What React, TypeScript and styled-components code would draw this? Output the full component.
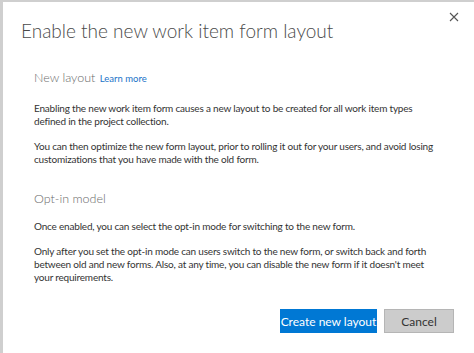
import React from 'react';
import styled, { createGlobalStyle } from 'styled-components';

const GlobalStyle = createGlobalStyle`
  html, body {
    margin: 0;
    padding: 0;
    background: #ffffff;
  }
  body {
    font-family: Lato, "Liberation Sans", sans-serif;
  }
`;

const App = () => (
  <>
    <GlobalStyle />
    <Dialog>
      <Header>
        <Title>Enable the new work item form layout</Title>
        <CloseButton aria-label="Close">
          <svg width="10" height="10" viewBox="0 0 10 10">
            <path d="M1 1 L9 9 M9 1 L1 9" stroke="#555" strokeWidth="1.1" />
          </svg>
        </CloseButton>
      </Header>
      <Body>
        <Section>
          <SectionTitle $space={2}>
            New layout <LearnMore href="#">Learn more</LearnMore>
          </SectionTitle>
          <Paragraph>
            Enabling the new work item form causes a new layout to be created for all work item types
            <br />
            defined in the project collection.
          </Paragraph>
          <Paragraph>
            You can then optimize the new form layout, prior to rolling it out for your users, and avoid losing
            <br />
            customizations that you have made with the old form.
          </Paragraph>
        </Section>
        <Section>
          <SectionTitle $space={0}>Opt-in model</SectionTitle>
          <Paragraph>Once enabled, you can select the opt-in mode for switching to the new form.</Paragraph>
          <Paragraph>
            Only after you set the opt-in mode can users switch to the new form, or switch back and forth
            <br />
            between old and new forms. Also, at any time, you can disable the new form if it doesn't meet
            <br />
            your requirements.
          </Paragraph>
        </Section>
      </Body>
      <Footer>
        <PrimaryButton>Create new layout</PrimaryButton>
        <SecondaryButton>Cancel</SecondaryButton>
      </Footer>
    </Dialog>
  </>
);

const Dialog = styled.div`
  box-sizing: border-box;
  width: 474px;
  height: 353px;
  border-left: 3px solid #cfcfcf;
  border-top: 2px solid #cfcfcf;
  background: #ffffff;
  display: flex;
  flex-direction: column;
  overflow: hidden;
`;

const Header = styled.div`
  position: relative;
  padding: 15px 0 0 18px;
  height: 48px;
  box-sizing: border-box;
`;

const Title = styled.h1`
  margin: 0;
  font-family: Lato, "Liberation Sans", sans-serif;
  font-weight: 300;
  font-size: 19px;
  line-height: 28px;
  color: #4a4a4a;
`;

const CloseButton = styled.button`
  position: absolute;
  top: 8px;
  right: 13px;
  width: 14px;
  height: 14px;
  padding: 0;
  border: none;
  background: transparent;
  display: flex;
  align-items: center;
  justify-content: center;
`;

const Body = styled.div`
  padding: 19px 20px 0 31px;
  display: flex;
  flex-direction: column;
  gap: 24px;
`;

const Section = styled.div`
  display: flex;
  flex-direction: column;
  gap: 12px;
`;

const SectionTitle = styled.h2<{ $space: number }>`
  margin: 0 0 ${p => p.$space}px;
  font-family: Lato, "Liberation Sans", sans-serif;
  font-weight: 300;
  font-size: 12.5px;
  line-height: 18px;
  color: #6a6a6a;
`;

const LearnMore = styled.a`
  font-family: Lato, "Liberation Sans", sans-serif;
  font-weight: 400;
  font-size: 9.5px;
  color: #1a73c8;
  text-decoration: none;
  margin-left: 1px;
`;

const Paragraph = styled.p`
  margin: 0;
  font-family: Lato, "Liberation Sans", sans-serif;
  font-size: 10px;
  letter-spacing: -0.2px;
  line-height: 13px;
  color: #333333;
  white-space: nowrap;
`;

const Footer = styled.div`
  margin-top: auto;
  display: flex;
  justify-content: flex-end;
  gap: 7px;
  padding: 0 20px 20px 0;
`;

const PrimaryButton = styled.button`
  height: 24px;
  width: 97px;
  padding: 0;
  border: none;
  background: #0078d4;
  color: #ffffff;
  font-family: Lato, "Liberation Sans", sans-serif;
  font-size: 12px;
`;

const SecondaryButton = styled.button`
  height: 24px;
  width: 70px;
  box-sizing: border-box;
  border: 1px solid #b5b5b5;
  background: #cccccc;
  color: #333333;
  font-family: Lato, "Liberation Sans", sans-serif;
  font-size: 12px;
`;

export default App;
